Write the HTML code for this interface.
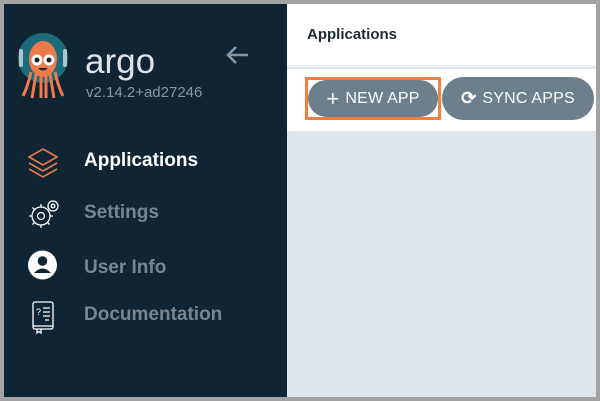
<!DOCTYPE html>
<html><head><style>
*{margin:0;padding:0;box-sizing:border-box}
body{width:600px;height:401px;background:#a3a3a3;position:relative;overflow:hidden;font-family:"Liberation Sans",sans-serif}
#sb{position:absolute;left:4px;top:4px;width:283px;height:393px;background:#0f2533}
#main{position:absolute;left:287px;top:4px;width:309px;height:393px;background:#dee6eb}
#hdr{position:absolute;left:0;top:0;width:309px;height:63px;background:#fff;border-bottom:2px solid #eef2f4}
#tb{position:absolute;left:0;top:65px;width:309px;height:62px;background:#fff}
.t{position:absolute;font-weight:bold}
.pill{position:absolute;background:#6d7f8b;color:#fff;border-radius:20px;font-size:16px;display:flex;align-items:center;justify-content:center;letter-spacing:.2px}
</style></head><body>
<div id="sb">
 <svg style="position:absolute;left:14px;top:28px" width="56" height="72" viewBox="0 0 56 72">
  <circle cx="25" cy="26" r="25" fill="#1d6b7a"/>
  <rect x="1" y="17" width="4" height="18" rx="2" fill="#a9c6d2"/>
  <rect x="45" y="17" width="4" height="18" rx="2" fill="#a9c6d2"/>
  <ellipse cx="25" cy="27" rx="14" ry="18" fill="#ef7b4d"/>
  <path d="M13 40 q-3 14 -8 24 M18 42 q-2 12 -4 24 M23 44 v22 M28 44 v22 M32 42 q2 12 4 24 M37 40 q3 14 8 24" stroke="#ef7b4d" stroke-width="3" fill="none"/>
  <circle cx="19" cy="28" r="5.5" fill="#fff"/><circle cx="31" cy="28" r="5.5" fill="#fff"/>
  <circle cx="19" cy="28" r="2.5" fill="#222"/><circle cx="31" cy="28" r="2.5" fill="#222"/>
  <path d="M20 36 q5 5 10 0z" fill="#222"/>
 </svg>
 <div class="t" style="left:81px;top:38px;font-size:35px;color:#e0e3e4;font-weight:normal">argo</div>
 <div class="t" style="left:82px;top:80px;font-size:15px;color:#8b969c;font-weight:normal">v2.14.2+ad27246</div>
 <svg style="position:absolute;left:220px;top:40px" width="26" height="22" viewBox="0 0 26 22"><path d="M24 11H4M12 3l-8 8 8 8" stroke="#8b969c" stroke-width="2.6" fill="none"/></svg>
 <svg style="position:absolute;left:22px;top:143px" width="34" height="32" viewBox="0 0 34 32"><g stroke="#ec7a45" stroke-width="1.6" fill="none"><path d="M17 2 31 10 17 18 3 10z"/><path d="M3 16l14 8 14-8"/><path d="M3 22l14 8 14-8"/></g></svg>
 <div class="t" style="left:80px;top:146px;font-size:19px;color:#fff">Applications</div>
 <svg style="position:absolute;left:23px;top:193px" width="34" height="34" viewBox="0 0 34 34"><g stroke="#fff" stroke-width="1.3" fill="none"><circle cx="14" cy="19" r="9"/><circle cx="14" cy="19" r="3.5"/><path d="M14 7v3M14 28v3M2 19h3M23 19h3M5.5 10.5l2 2M20.5 25.5l2 2M5.5 27.5l2-2"/><circle cx="26" cy="9" r="5"/><circle cx="26" cy="9" r="1.8"/></g></svg>
 <div class="t" style="left:80px;top:198px;font-size:19px;color:#79858d">Settings</div>
 <svg style="position:absolute;left:24px;top:246px" width="32" height="32" viewBox="0 0 32 32"><circle cx="14.5" cy="15" r="14.5" fill="#fff"/><circle cx="14.5" cy="11" r="4.8" fill="#0f2533"/><path d="M6 23q8.5-9 17 0z" fill="#0f2533"/></svg>
 <div class="t" style="left:80px;top:253px;font-size:19px;color:#79858d">User Info</div>
 <svg style="position:absolute;left:24px;top:296px" width="34" height="34" viewBox="0 0 34 34"><g stroke="#fff" stroke-width="1.3" fill="none"><rect x="5" y="2" width="20" height="27" rx="2"/><path d="M5 26h20M9 29v4l2-1.5 2 1.5v-4M15 8h7M15 12h7M15 16h7M17 20h4"/></g><text x="8" y="15" fill="#fff" font-size="9" font-family="Liberation Sans">?</text></svg>
 <div class="t" style="left:80px;top:300px;font-size:19px;color:#79858d">Documentation</div>
</div>
<div id="main">
 <div id="hdr"><div class="t" style="left:20px;top:22px;font-size:15px;color:#1e2a33">Applications</div></div>
 <div id="tb"></div>
 <div style="position:absolute;left:18px;top:73px;width:136px;height:43px;border:3px solid #f5803e;background:#fff"></div>
 <div class="pill" style="left:21px;top:76px;width:130px;height:37px"><b style="font-weight:normal;font-size:22px;margin-right:6px">+</b>NEW APP</div>
 <div class="pill" style="left:155px;top:73px;width:152px;height:43px;border-radius:22px"><b style="font-size:18px;margin-right:6px">⟳</b>SYNC APPS</div>
</div>
</body></html>
